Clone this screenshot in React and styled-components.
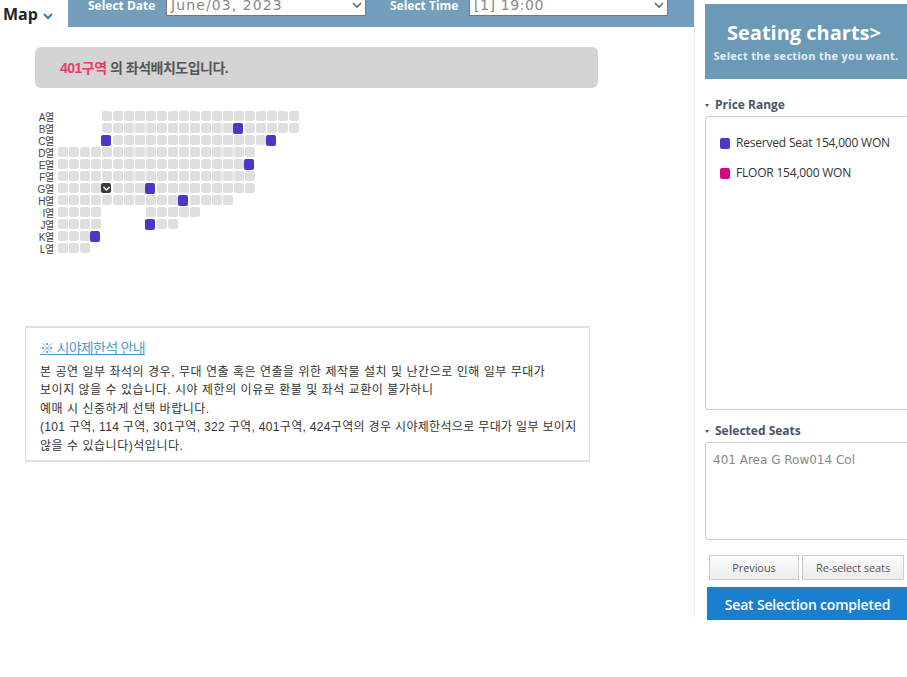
import React from "react";
import styled, { createGlobalStyle } from "styled-components";

const KO = `"Liberation Sans", "Noto Sans CJK KR", sans-serif`;
const UI = `"Open Sans", "Noto Sans CJK KR", sans-serif`;

// [row, seat columns, purple columns, dark column]
const range = (a, b) => Array.from({ length: b - a + 1 }, (_, i) => a + i);
const ROWS = [
  { name: "A", cols: range(4, 21) },
  { name: "B", cols: range(4, 21), taken: [16] },
  { name: "C", cols: range(4, 19), taken: [4, 19] },
  { name: "D", cols: range(0, 17) },
  { name: "E", cols: range(0, 17), taken: [17] },
  { name: "F", cols: range(0, 17) },
  { name: "G", cols: range(0, 17), taken: [8], picked: 4 },
  { name: "H", cols: range(0, 15), taken: [11] },
  { name: "I", cols: [...range(0, 3), ...range(8, 12)] },
  { name: "J", cols: [...range(0, 3), ...range(8, 10)], taken: [8] },
  { name: "K", cols: range(0, 3), taken: [3] },
  { name: "L", cols: range(0, 2) },
];

const Chevron = ({ size = 12, color = "#666", width = 1.6 }) => (
  <svg width={size} height={size} viewBox="0 0 12 12" fill="none">
    <path d="M2 4l4 4 4-4" stroke={color} strokeWidth={width} />
  </svg>
);

const App = () => {
  return (
    <Page>
      <GlobalStyle />
      <Main>
        <TopRow>
          <MapTitle>
            Map <Chevron size={12} color="#2a7fb8" width={2} />
          </MapTitle>
          <FilterBar>
            <FilterLabel>Select Date</FilterLabel>
            <SelectBox $width={200} $spacing={1.1}>
              June/03, 2023
              <Chevron />
            </SelectBox>
            <FilterLabel $left={24} $width={79}>Select Time</FilterLabel>
            <SelectBox $width={199} $spacing={0.6}>
              [1] 19:00
              <Chevron />
            </SelectBox>
          </FilterBar>
        </TopRow>

        <Banner>
          <Pink>401구역</Pink> 의 좌석배치도입니다.
        </Banner>

        <SeatMap>
          {ROWS.map((row) => (
            <SeatRow key={row.name}>
              <RowLabel>{row.name}열</RowLabel>
              <SeatGrid>
                {row.cols.map((col) => (
                  <Seat
                    key={col}
                    $col={col}
                    $taken={row.taken && row.taken.includes(col)}
                    $picked={row.picked === col}
                  >
                    {row.picked === col && <Chevron size={9} color="#fff" width={2} />}
                  </Seat>
                ))}
              </SeatGrid>
            </SeatRow>
          ))}
        </SeatMap>

        <Notice>
          <NoticeTitle>※ 시야제한석 안내</NoticeTitle>
          <NoticeText>
            <NoticeLine>본 공연 일부 좌석의 경우, 무대 연출 혹은 연출을 위한 제작물 설치 및 난간으로 인해 일부 무대가</NoticeLine>
            <NoticeLine>보이지 않을 수 있습니다. 시야 제한의 이유로 환불 및 좌석 교환이 불가하니</NoticeLine>
            <NoticeLine>예매 시 신중하게 선택 바랍니다.</NoticeLine>
            <NoticeLine $spacing={0.33}>
              (101 구역, 114 구역, 301구역, 322 구역, 401구역, 424구역의 경우 시야제한석으로 무대가 일부 보이지
            </NoticeLine>
            <NoticeLine>않을 수 있습니다)석입니다.</NoticeLine>
          </NoticeText>
        </Notice>
      </Main>

      <Side>
        <SideHead>
          <SideTitle>Seating charts&gt;</SideTitle>
          <SideSub>Select the section the you want.</SideSub>
        </SideHead>

        <SectionTitle>Price Range</SectionTitle>
        <PriceBox>
          <PriceItem>
            <Swatch $color="#4f36c6" />
            Reserved Seat 154,000 WON
          </PriceItem>
          <PriceItem>
            <Swatch $color="#d6047f" />
            FLOOR 154,000 WON
          </PriceItem>
        </PriceBox>

        <SectionTitle $top={12}>Selected Seats</SectionTitle>
        <SelectedBox>401 Area G Row014 Col</SelectedBox>

        <ButtonRow>
          <GreyButton $width={90}>Previous</GreyButton>
          <GreyButton $width={102}>Re-select seats</GreyButton>
        </ButtonRow>
        <DoneButton>Seat Selection completed</DoneButton>
      </Side>
    </Page>
  );
};
export default App;

const GlobalStyle = createGlobalStyle`
  body {
    margin: 0;
    background: #fff;
    font-family: ${KO};
  }
`;

const Page = styled.div`
  width: 907px;
  height: 620px;
  display: flex;
  overflow: hidden;
`;

const Main = styled.div`
  width: 694px;
  flex-shrink: 0;
`;

const TopRow = styled.div`
  height: 27px;
  display: flex;
`;

const MapTitle = styled.div`
  width: 68px;
  height: 27px;
  padding: 5px 0 0 3px;
  box-sizing: border-box;
  font: 700 16px/19px ${UI};
  color: #222;
  svg {
    vertical-align: -2px;
  }
`;

const FilterBar = styled.div`
  flex: 1;
  height: 27px;
  padding: 0 0 11px 20px;
  box-sizing: border-box;
  background: #739fbc;
  display: flex;
  align-items: flex-end;
  overflow: hidden;
`;

const FilterLabel = styled.div`
  width: ${(p) => p.$width || 78}px;
  margin-left: ${(p) => p.$left || 0}px;
  font: 700 12px/22px ${UI};
  color: #fff;
  white-space: nowrap;
  align-self: flex-end;
  position: relative;
  top: 1px;
`;

const SelectBox = styled.div`
  width: ${(p) => p.$width}px;
  height: 24px;
  flex-shrink: 0;
  box-sizing: border-box;
  padding: 2px 2px 0 4px;
  background: #fff;
  border: 1px solid #777;
  border-top: none;
  display: flex;
  align-items: center;
  justify-content: space-between;
  font: 400 14px/22px "DejaVu Sans", sans-serif;
  color: #888;
  letter-spacing: ${(p) => p.$spacing}px;
`;

const Banner = styled.div`
  width: 563px;
  height: 41px;
  margin: 20px 0 0 35px;
  padding-left: 25px;
  box-sizing: border-box;
  background: #d4d4d4;
  border-radius: 6px;
  font: 700 14px/42px ${KO};
  letter-spacing: -0.5px;
  color: #555;
`;

const Pink = styled.span`
  color: #ec3a66;
`;

const SeatMap = styled.div`
  margin: 23px 0 0 36px;
  display: flex;
  flex-direction: column;
  gap: 2px;
`;

const SeatRow = styled.div`
  display: flex;
  height: 10px;
`;

const RowLabel = styled.div`
  width: 18px;
  margin-right: 4px;
  text-align: right;
  font: 400 10px/14px ${KO};
  letter-spacing: -0.3px;
  color: #444;
  white-space: nowrap;
`;

const SeatGrid = styled.div`
  display: grid;
  grid-template-columns: repeat(22, 10px);
  column-gap: 1px;
`;

const Seat = styled.div`
  grid-row: 1;
  grid-column: ${(p) => p.$col + 1};
  width: 10px;
  height: ${(p) => (p.$taken ? 11 : 10)}px;
  margin-left: ${(p) => (p.$taken || p.$picked ? -1 : 0)}px;
  border-radius: 2px;
  background: ${(p) => (p.$picked ? "#3c3c3c" : p.$taken ? "#5036c8" : "#dfdfdf")};
  display: flex;
  align-items: center;
  justify-content: center;
`;

const Notice = styled.div`
  width: 565px;
  height: 136px;
  margin: 73px 0 0 25px;
  padding: 10px 0 0 14px;
  box-sizing: border-box;
  border: 1px solid #e0e0e0;
  border-width: 2px 1px 2px 1px;
`;

const NoticeTitle = styled.div`
  font: 400 14px/20px ${KO};
  letter-spacing: -0.7px;
  color: #4f9cc6;
  text-decoration: underline;
`;

const NoticeText = styled.div`
  margin-top: 5px;
  font: 400 12px/18.4px ${KO};
  color: #333;
  white-space: nowrap;
`;

const NoticeLine = styled.div`
  letter-spacing: ${(p) => p.$spacing ?? 0.53}px;
`;

const Side = styled.div`
  width: 213px;
  flex-shrink: 0;
  box-sizing: border-box;
  padding: 4px 0 0 10px;
  border-left: 1px solid #eee;
`;

const SideHead = styled.div`
  width: 202px;
  height: 75px;
  padding-top: 16px;
  box-sizing: border-box;
  background: #6a9ab6;
  text-align: center;
  color: #fff;
`;

const SideTitle = styled.div`
  font: 700 20px/26px ${UI};
  padding-right: 4px;
`;

const SideSub = styled.div`
  margin-top: 2px;
  font: 700 11px/15px ${UI};
  letter-spacing: 0.3px;
  color: #e6edf2;
`;

const SectionTitle = styled.div`
  margin-top: ${(p) => p.$top || 17}px;
  height: 18px;
  display: flex;
  align-items: center;
  font: 700 12px/18px ${UI};
  color: #4a5568;
  &::before {
    content: "";
    margin: 0 6px 0 0;
    border: 2.5px solid transparent;
    border-top: 3px solid #4a5568;
    border-bottom: none;
  }
`;

const PriceBox = styled.div`
  width: 204px;
  height: 294px;
  margin-top: 2px;
  padding: 16px 0 0 14px;
  box-sizing: border-box;
  border: 1px solid #ccc;
  border-radius: 3px;
`;

const PriceItem = styled.div`
  height: 20px;
  margin-bottom: 10px;
  display: flex;
  align-items: center;
  gap: 6px;
  font: 400 12px/20px ${UI};
  letter-spacing: -0.2px;
  color: #333;
  white-space: nowrap;
`;

const Swatch = styled.span`
  width: 10px;
  height: 11px;
  border-radius: 2px;
  background: ${(p) => p.$color};
`;

const SelectedBox = styled.div`
  width: 204px;
  height: 98px;
  margin-top: 2px;
  padding: 8px 7px;
  box-sizing: border-box;
  border: 1px solid #ccc;
  border-radius: 3px;
  font: 400 12px/18px "DejaVu Sans", sans-serif;
  color: #888;
`;

const ButtonRow = styled.div`
  display: flex;
  gap: 3px;
  margin: 15px 0 0 4px;
`;

const GreyButton = styled.button`
  width: ${(p) => p.$width}px;
  height: 25px;
  padding: 0;
  box-sizing: border-box;
  border: 1px solid #ccc;
  background: linear-gradient(#fbfbfb, #ececec);
  font: 400 11px/23px ${UI};
  letter-spacing: -0.1px;
  color: #555;
`;

const DoneButton = styled.button`
  display: block;
  width: 200px;
  height: 34px;
  margin: 7px 0 0 2px;
  padding: 1px 0 0 1px;
  border: none;
  background: #1a7fce;
  font: 600 14px/33px ${UI};
  letter-spacing: -0.2px;
  color: #fff;
`;
